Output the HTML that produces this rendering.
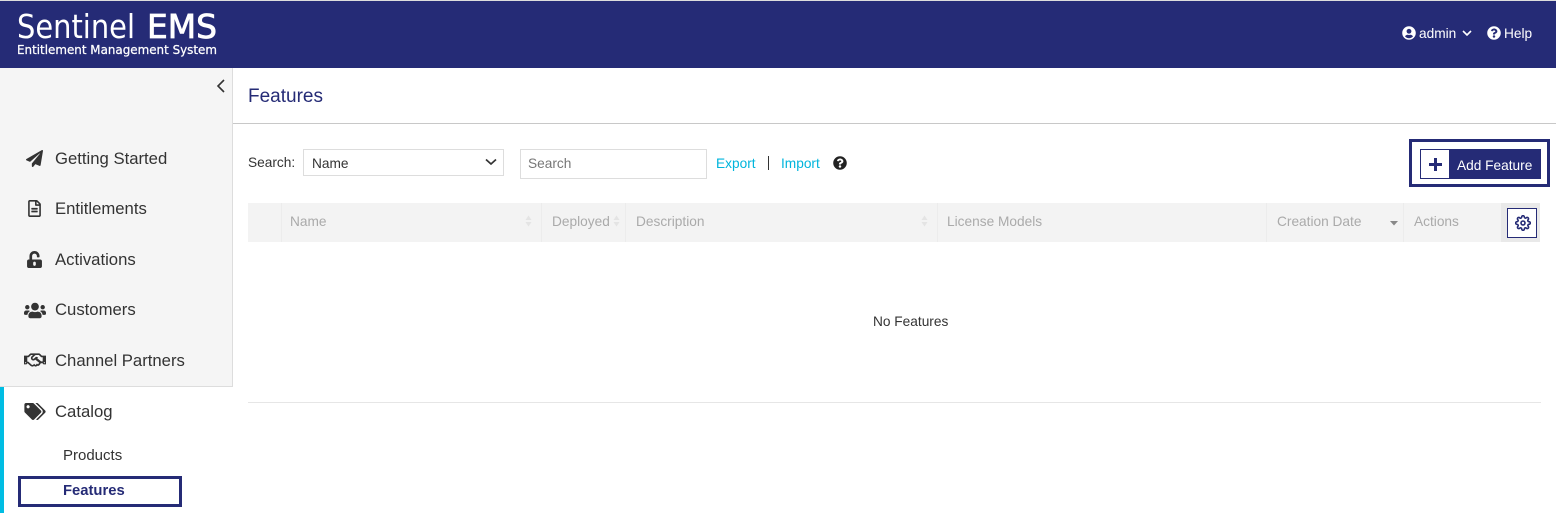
<!DOCTYPE html>
<html lang="en"><head><meta charset="utf-8"><title>Features</title>
<style>
html,body{margin:0;padding:0;background:#fff}
body{position:relative;width:1556px;height:513px;overflow:hidden;font-family:"Liberation Sans",sans-serif;font-size:13.7px;color:#333}
.a{position:absolute;white-space:nowrap}
svg{position:absolute;display:block}
.nav{font-size:16.7px;color:#333;line-height:20px;left:55px}
.th{color:#aaa;font-size:13.7px;line-height:16px;top:214px}
.dv{position:absolute;top:203px;width:1px;height:39px;background:#ececec}
.sort{position:absolute;width:7px;height:14px}
</style></head><body>
<div class="a" style="left:0;top:0;width:1556px;height:1px;background:#ddd"></div>
<div class="a" style="left:0;top:1px;width:1556px;height:67px;background:#252b76"></div>
<svg style="left:0;top:0" width="240" height="68">
<text x="17" y="38" font-family="DejaVu Sans" font-size="33" fill="#fff" textLength="118" lengthAdjust="spacingAndGlyphs">Sentinel</text>
<text x="147" y="38" font-family="DejaVu Sans" font-size="33" fill="#fff" stroke="#fff" stroke-width=".8" textLength="70" lengthAdjust="spacingAndGlyphs">EMS</text>
<text x="17" y="54" font-family="DejaVu Sans" font-size="12.500" fill="#fff" stroke="#fff" stroke-width=".25" textLength="200" lengthAdjust="spacingAndGlyphs">Entitlement Management System</text>
</svg>
<svg style="left:1402px;top:26px" width="14" height="14" viewBox="0 0 496 512"><path fill="#fff" d="M248 8C111 8 0 119 0 256s111 248 248 248 248-111 248-248S385 8 248 8zm0 96c48.600 0 88 39.400 88 88s-39.400 88-88 88-88-39.400-88-88 39.400-88 88-88zm0 344c-58.700 0-111.300-26.600-146.500-68.200 18.800-35.400 55.600-59.800 98.500-59.800 2.400 0 4.800.4 7.100 1.100 13 4.200 26.600 6.900 40.900 6.900 14.300 0 28-2.700 40.900-6.900 2.300-.7 4.700-1.100 7.100-1.100 42.900 0 79.700 24.400 98.500 59.800C359.300 421.400 306.700 448 248 448z"/></svg>
<div class="a" style="left:1419px;top:26px;color:#fff;line-height:16px">admin</div>
<svg style="left:1462px;top:30px" width="10" height="6" viewBox="0 0 10 6"><path d="M1 1l4 4 4-4" fill="none" stroke="#fff" stroke-width="1.600"/></svg>
<svg style="left:1487px;top:26px" width="14" height="14" viewBox="0 0 512 512"><path fill="#fff" d="M504 256c0 136.997-111.043 248-248 248S8 392.997 8 256C8 119.083 119.043 8 256 8s248 111.083 248 248zM262.655 90c-54.497 0-89.255 22.957-116.549 63.758-3.536 5.286-2.353 12.415 2.715 16.258l34.699 26.310c5.205 3.947 12.621 3.008 16.665-2.122 17.864-22.658 30.113-35.797 57.303-35.797 20.429 0 45.698 13.148 45.698 32.958 0 14.976-12.363 22.667-32.534 33.976C247.128 238.528 216 254.941 216 296v4c0 6.627 5.373 12 12 12h56c6.627 0 12-5.373 12-12v-1.333c0-28.462 83.186-29.647 83.186-106.667 0-58.002-60.165-102-116.531-102zM256 338c-25.365 0-46 20.635-46 46 0 25.364 20.635 46 46 46s46-20.636 46-46c0-25.365-20.635-46-46-46z"/></svg>
<div class="a" style="left:1504px;top:26px;color:#fff;line-height:16px">Help</div>

<div class="a" style="left:0;top:68px;width:232px;height:318px;background:#f5f5f5;border-right:1px solid #ddd;border-bottom:1px solid #ddd"></div>
<svg style="left:216px;top:78px" width="10" height="16" viewBox="0 0 10 16"><path d="M8 2L2 8l6 6" fill="none" stroke="#333" stroke-width="1.600"/></svg>

<svg style="left:26px;top:150px" width="17" height="17" viewBox="0 0 512 512"><path fill="#333" d="M476 3.200L12.500 270.600c-18.100 10.400-15.800 35.600 2.200 43.200L121 358.400l287.300-253.200c5.500-4.900 13.300 2.600 8.600 8.300L176 407v80.500c0 23.600 28.500 32.900 42.500 15.800L282 426l124.600 52.200c14.200 6 30.400-2.900 33-18.200l72-432C515 7.800 493.300-6.800 476 3.200z"/></svg>
<div class="a nav" style="top:149px">Getting Started</div>
<svg style="left:28px;top:200px" width="13" height="17" viewBox="0 0 384 512"><path fill="#333" d="M288 248v28c0 6.600-5.400 12-12 12H108c-6.600 0-12-5.400-12-12v-28c0-6.600 5.400-12 12-12h168c6.600 0 12 5.400 12 12zm-12 72H108c-6.600 0-12 5.400-12 12v28c0 6.600 5.400 12 12 12h168c6.600 0 12-5.400 12-12v-28c0-6.600-5.400-12-12-12zm108-188.100V464c0 26.500-21.500 48-48 48H48c-26.500 0-48-21.500-48-48V48C0 21.500 21.500 0 48 0h204.100C264.800 0 277 5.100 286 14.100L369.900 98c9 8.900 14.100 21.200 14.100 33.900zm-128-80V128h76.100L256 51.900zM336 464V176H232c-13.300 0-24-10.700-24-24V48H48v416h288z"/></svg>
<div class="a nav" style="top:199px">Entitlements</div>
<svg style="left:27px;top:251px" width="15" height="17" viewBox="0 0 448 512"><path fill="#333" d="M400 256H152V152.900c0-39.600 31.700-72.500 71.300-72.900 40-.4 72.700 32.100 72.700 72v16c0 13.300 10.700 24 24 24h32c13.300 0 24-10.700 24-24v-16C376 68 307.500-.3 223.500 0 139.500.3 72 69.500 72 153.500V256H48c-26.500 0-48 21.500-48 48v160c0 26.500 21.500 48 48 48h352c26.500 0 48-21.500 48-48V304c0-26.500-21.500-48-48-48zM264 408c0 22.100-17.900 40-40 40s-40-17.900-40-40v-48c0-22.100 17.900-40 40-40s40 17.900 40 40v48z"/></svg>
<div class="a nav" style="top:250px">Activations</div>
<svg style="left:24px;top:301px" width="22" height="19" viewBox="0 0 640 512"><path fill="#333" d="M96 224c35.300 0 64-28.700 64-64s-28.700-64-64-64-64 28.700-64 64 28.700 64 64 64zm448 0c35.300 0 64-28.700 64-64s-28.700-64-64-64-64 28.700-64 64 28.700 64 64 64zm32 32h-64c-17.600 0-33.500 7.100-45.100 18.600 40.300 22.100 68.900 62 75.100 109.400h66c17.700 0 32-14.300 32-32v-32c0-35.300-28.700-64-64-64zm-256 0c61.900 0 112-50.100 112-112S381.900 32 320 32 208 82.100 208 144s50.100 112 112 112zm76.800 32h-8.300c-20.800 10-43.900 16-68.500 16s-47.600-6-68.500-16h-8.300C179.600 288 128 339.600 128 403.200V432c0 26.500 21.500 48 48 48h288c26.500 0 48-21.500 48-48v-28.800c0-63.600-51.600-115.200-115.200-115.200zm-223.700-13.400C161.500 263.100 145.600 256 128 256H64c-35.300 0-64 28.700-64 64v32c0 17.700 14.300 32 32 32h65.900c6.300-47.400 34.900-87.300 75.200-109.400z"/></svg>
<div class="a nav" style="top:300px">Customers</div>
<svg style="left:24px;top:351px" width="22" height="18" viewBox="0 0 640 512"><path fill="#333" d="M519.200 127.900l-47.600-47.600A56.252 56.252 0 0 0 432 64H205.200c-14.800 0-29.100 5.900-39.600 16.300L118 127.900H0v255.700h64c17.600 0 31.800-14.200 31.900-31.700h9.100l84.600 76.400c30.900 25.100 73.800 25.700 105.600 3.800 12.500 10.800 26 15.900 41.100 15.900 18.200 0 35.300-7.400 48.800-24 22.100 8.700 48.200 2.600 64-16.800l26.200-32.300c5.600-6.900 9.100-14.800 10.900-23h57.900c.1 17.500 14.400 31.700 31.900 31.700h64V127.900H519.200zM48 351.600c-8.800 0-16-7.200-16-16s7.200-16 16-16 16 7.200 16 16c0 8.900-7.200 16-16 16zm390-6.900l-26.100 32.200c-2.800 3.400-7.800 4-11.300 1.200l-23.900-19.400-30 36.500c-6 7.300-15 4.800-18 2.400l-36.800-31.500-15.600 19.200c-13.900 17.100-39.200 19.700-55.300 6.600l-97.300-88H96V175.800h41.900l61.700-61.600c2-.8 3.700-1.500 5.700-2.300H262l-38.700 35.500c-29.400 26.900-31.100 72.300-4.400 101.300 14.800 16.200 61.200 41.200 101.500 4.400l8.200-7.500 108.200 87.800c3.400 2.800 3.900 7.900 1.200 11.300zm106-48.100h-48.100c-2.300-2.800-4.900-5.400-7.700-7.700l-102.700-83.400 12.500-11.400c6.500-6 7-16.100 1-22.600L367 167.100c-6-6.500-16.100-6.900-22.600-1l-55.200 50.600c-9.500 8.700-25.700 9.400-34.600 0-9.300-9.900-8.500-25.100 1.200-33.900l65.600-60.100c7.400-6.800 17-10.500 27-10.500l83.700-.2c2.100 0 4.100.8 5.500 2.300l61.700 61.600H544v120.600zm48 54.900c-8.800 0-16-7.200-16-16s7.200-16 16-16 16 7.200 16 16c0 8.900-7.200 16-16 16z"/></svg>
<div class="a nav" style="top:351px">Channel Partners</div>

<div class="a" style="left:0;top:387px;width:4px;height:126px;background:#00bde3"></div>
<svg style="left:24px;top:403px" width="22" height="17" viewBox="0 0 640 512"><path fill="#333" d="M497.941 225.941L286.059 14.059A48 48 0 0 0 252.118 0H48C21.490 0 0 21.490 0 48v204.118a48 48 0 0 0 14.059 33.941l211.882 211.882c18.744 18.745 49.136 18.746 67.882 0l204.118-204.118c18.745-18.745 18.745-49.137 0-67.882zM112 160c-26.510 0-48-21.490-48-48s21.490-48 48-48 48 21.490 48 48-21.490 48-48 48zm513.941 133.823L421.823 497.941c-18.745 18.745-49.137 18.745-67.882 0l-.36-.36L527.640 323.522c16.999-16.999 26.360-39.600 26.360-63.640s-9.362-46.641-26.360-63.640L331.397 0h48.721a48 48 0 0 1 33.941 14.059l211.882 211.882c18.745 18.745 18.745 49.137 0 67.882z"/></svg>
<div class="a nav" style="top:402px">Catalog</div>
<div class="a" style="left:63px;top:447px;font-size:15px;line-height:17px;color:#333">Products</div>
<div class="a" style="left:18px;top:476px;width:158px;height:25px;border:3px solid #252b76"></div>
<div class="a" style="left:63px;top:483px;font-size:14.800px;line-height:17px;font-weight:bold;color:#252b76">Features</div>

<div class="a" style="left:248px;top:86px;font-size:19px;line-height:22px;color:#252b76">Features</div>
<div class="a" style="left:233px;top:123px;width:1323px;height:1px;background:#c8c8c8"></div>

<div class="a" style="left:248px;top:155px;line-height:16px;color:#333">Search:</div>
<div class="a" style="left:303px;top:149px;width:199px;height:25px;border:1px solid #ddd;background:#fff"></div>
<div class="a" style="left:312px;top:156px;line-height:16px;color:#333">Name</div>
<svg style="left:485px;top:158px" width="12" height="8" viewBox="0 0 12 8"><path d="M1 1.500l5 4.500 5-4.500" fill="none" stroke="#333" stroke-width="1.700"/></svg>
<div class="a" style="left:520px;top:149px;width:185px;height:28px;border:1px solid #ddd;background:#fff"></div>
<div class="a" style="left:528px;top:156px;line-height:16px;color:#777">Search</div>
<div class="a" style="left:716px;top:156px;line-height:16px;color:#00b5dc">Export</div>
<div class="a" style="left:768px;top:156px;width:1px;height:14px;background:#333"></div>
<div class="a" style="left:781px;top:156px;line-height:16px;color:#00b5dc">Import</div>
<svg style="left:833px;top:156px" width="14" height="14" viewBox="0 0 512 512"><path fill="#222" d="M504 256c0 136.997-111.043 248-248 248S8 392.997 8 256C8 119.083 119.043 8 256 8s248 111.083 248 248zM262.655 90c-54.497 0-89.255 22.957-116.549 63.758-3.536 5.286-2.353 12.415 2.715 16.258l34.699 26.310c5.205 3.947 12.621 3.008 16.665-2.122 17.864-22.658 30.113-35.797 57.303-35.797 20.429 0 45.698 13.148 45.698 32.958 0 14.976-12.363 22.667-32.534 33.976C247.128 238.528 216 254.941 216 296v4c0 6.627 5.373 12 12 12h56c6.627 0 12-5.373 12-12v-1.333c0-28.462 83.186-29.647 83.186-106.667 0-58.002-60.165-102-116.531-102zM256 338c-25.365 0-46 20.635-46 46 0 25.364 20.635 46 46 46s46-20.636 46-46c0-25.365-20.635-46-46-46z"/></svg>

<div class="a" style="left:1409px;top:139px;width:135px;height:42px;border:3px solid #252b76"></div>
<div class="a" style="left:1420px;top:149px;width:121px;height:30px;background:#252b76"></div>
<div class="a" style="left:1421px;top:150px;width:28px;height:28px;background:#fff"></div>
<div class="a" style="left:1429px;top:163px;width:13px;height:3px;background:#252b76"></div>
<div class="a" style="left:1434px;top:158px;width:3px;height:13px;background:#252b76"></div>
<div class="a" style="left:1457px;top:158px;line-height:16px;color:#fff">Add Feature</div>

<div class="a" style="left:248px;top:203px;width:1292px;height:39px;background:#f3f3f3"></div>
<div class="a" style="left:1501px;top:203px;width:39px;height:39px;background:#e9e9e9"></div>
<div class="dv" style="left:281px"></div><div class="dv" style="left:541px"></div><div class="dv" style="left:625px"></div><div class="dv" style="left:937px"></div><div class="dv" style="left:1266px"></div><div class="dv" style="left:1403px"></div>
<div class="a th" style="left:290px">Name</div>
<div class="a th" style="left:552px">Deployed</div>
<div class="a th" style="left:636px">Description</div>
<div class="a th" style="left:947px">License Models</div>
<div class="a th" style="left:1277px">Creation Date</div>
<div class="a th" style="left:1414px">Actions</div>
<svg class="sort" style="left:525px;top:214px" viewBox="0 0 7 14"><path fill="#e4e4e4" d="M.5 6L3.500 1.500 6.500 6zM.5 8l3 4.500 3-4.500z"/></svg>
<svg class="sort" style="left:613px;top:214px" viewBox="0 0 7 14"><path fill="#e4e4e4" d="M.5 6L3.500 1.500 6.500 6zM.5 8l3 4.500 3-4.500z"/></svg>
<svg class="sort" style="left:921px;top:214px" viewBox="0 0 7 14"><path fill="#e4e4e4" d="M.5 6L3.500 1.500 6.500 6zM.5 8l3 4.500 3-4.500z"/></svg>
<svg style="left:1389px;top:220px" width="10" height="6" viewBox="0 0 10 6"><path fill="#888" d="M1 1h8L5 5.500z"/></svg>
<div class="a" style="left:1507px;top:208px;width:28px;height:28px;background:#fff;border:1px solid #252b76"></div>
<svg style="left:1515px;top:215px" width="16" height="16" viewBox="0 0 24 24"><g fill="none" stroke="#252b76" stroke-width="2.400"><circle cx="12" cy="12" r="3"/><path d="M19.400 15a1.650 1.650 0 0 0 .33 1.820l.06.06a2 2 0 0 1 0 2.830 2 2 0 0 1-2.830 0l-.06-.06a1.650 1.650 0 0 0-1.820-.33 1.650 1.650 0 0 0-1 1.510V21a2 2 0 0 1-2 2 2 2 0 0 1-2-2v-.09A1.650 1.650 0 0 0 9 19.400a1.650 1.650 0 0 0-1.820.33l-.06.06a2 2 0 0 1-2.830 0 2 2 0 0 1 0-2.830l.06-.06a1.650 1.650 0 0 0 .33-1.820 1.650 1.650 0 0 0-1.510-1H3a2 2 0 0 1-2-2 2 2 0 0 1 2-2h.09A1.650 1.650 0 0 0 4.600 9a1.650 1.650 0 0 0-.33-1.820l-.06-.06a2 2 0 0 1 0-2.830 2 2 0 0 1 2.830 0l.06.06a1.650 1.650 0 0 0 1.820.33H9a1.650 1.650 0 0 0 1-1.510V3a2 2 0 0 1 2-2 2 2 0 0 1 2 2v.09a1.650 1.650 0 0 0 1 1.510 1.650 1.650 0 0 0 1.820-.33l.06-.06a2 2 0 0 1 2.830 0 2 2 0 0 1 0 2.830l-.06.06a1.650 1.650 0 0 0-.33 1.820V9a1.650 1.650 0 0 0 1.510 1H21a2 2 0 0 1 2 2 2 2 0 0 1-2 2h-.09a1.650 1.650 0 0 0-1.510 1z"/></g></svg>

<div class="a" style="left:873px;top:314px;line-height:16px;color:#333">No Features</div>
<div class="a" style="left:248px;top:402px;width:1293px;height:1px;background:#e6e6e6"></div>
</body></html>
